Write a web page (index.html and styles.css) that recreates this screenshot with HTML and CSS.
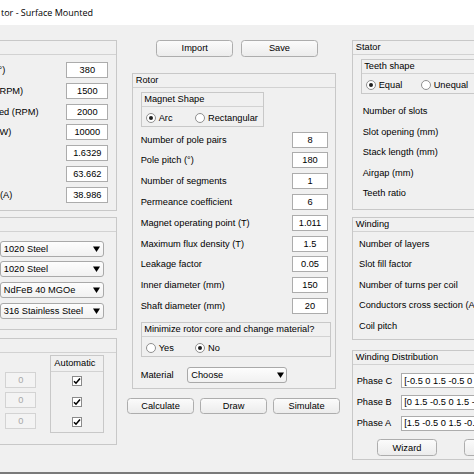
FILE: index.html
```html
<!DOCTYPE html>
<html lang="en">
<head>
<meta charset="utf-8">
<title>Motor - Surface Mounted</title>
<link rel="stylesheet" href="styles.css">
</head>
<body>
<div class="titlebar"><span class="title">tor - Surface Mounted</span></div>
<div class="main">
  <div class="col col-left">
    <section class="panel panel-specs">
      <div class="phead">Specifications</div>
      <div class="pbody specs">
        <div class="row"><span class="lbl">Phase angle (°)</span><span class="field">380</span></div>
        <div class="row"><span class="lbl">Rated speed (RPM)</span><span class="field">1500</span></div>
        <div class="row"><span class="lbl">Maximum speed (RPM)</span><span class="field">2000</span></div>
        <div class="row"><span class="lbl">Rated power (W)</span><span class="field">10000</span></div>
        <div class="row"><span class="lbl">Ratio</span><span class="field">1.6329</span></div>
        <div class="row"><span class="lbl">Torque (Nm)</span><span class="field">63.662</span></div>
        <div class="row"><span class="lbl">Rated current (A)</span><span class="field">38.986</span></div>
      </div>
    </section>
    <section class="panel panel-mat">
      <div class="phead">Materials</div>
      <div class="pbody mats">
        <div class="row"><span class="lbl">Rotor core</span><div class="dd dd-mat"><span>1020 Steel</span><svg class="arrow" width="7" height="6" viewBox="0 0 7 6"><polygon points="0,0.5 7,0.5 3.5,6" fill="#000"/></svg></div></div>
        <div class="row"><span class="lbl">Stator core</span><div class="dd dd-mat"><span>1020 Steel</span><svg class="arrow" width="7" height="6" viewBox="0 0 7 6"><polygon points="0,0.5 7,0.5 3.5,6" fill="#000"/></svg></div></div>
        <div class="row"><span class="lbl">Magnet</span><div class="dd dd-mat"><span>NdFeB 40 MGOe</span><svg class="arrow" width="7" height="6" viewBox="0 0 7 6"><polygon points="0,0.5 7,0.5 3.5,6" fill="#000"/></svg></div></div>
        <div class="row"><span class="lbl">Shaft</span><div class="dd dd-mat"><span>316 Stainless Steel</span><svg class="arrow" width="7" height="6" viewBox="0 0 7 6"><polygon points="0,0.5 7,0.5 3.5,6" fill="#000"/></svg></div></div>
      </div>
    </section>
    <section class="panel panel-auto">
      <div class="phead">Options</div>
      <div class="pbody autos">
        <div class="autofields">
          <div class="row"><span class="lbl">Yoke</span><span class="field dis">0</span></div>
          <div class="row"><span class="lbl">Tooth</span><span class="field dis">0</span></div>
          <div class="row"><span class="lbl">Slot</span><span class="field dis">0</span></div>
        </div>
        <div class="table">
          <div class="thead">Automatic</div>
          <div class="trow"><span class="check"><svg width="8" height="8" viewBox="0 0 8 8"><polyline points="1,4.2 3,6.2 7,1.6" fill="none" stroke="#000" stroke-width="1.6"/></svg></span></div>
          <div class="trow"><span class="check"><svg width="8" height="8" viewBox="0 0 8 8"><polyline points="1,4.2 3,6.2 7,1.6" fill="none" stroke="#000" stroke-width="1.6"/></svg></span></div>
          <div class="trow"><span class="check"><svg width="8" height="8" viewBox="0 0 8 8"><polyline points="1,4.2 3,6.2 7,1.6" fill="none" stroke="#000" stroke-width="1.6"/></svg></span></div>
        </div>
      </div>
    </section>
  </div>

  <div class="col col-mid">
    <div class="btnrow top-btns"><button class="btn btn-top">Import</button><button class="btn btn-top">Save</button></div>
    <section class="panel panel-rotor">
      <div class="phead">Rotor</div>
      <div class="pbody rotor">
        <div class="group g-magnet">
          <div class="ghead">Magnet Shape</div>
          <div class="radios"><span class="radio on r-first"><span class="dot"></span>Arc</span><span class="radio"><span class="dot"></span>Rectangular</span></div>
        </div>
        <div class="rotor-rows">
          <div class="row"><span class="lbl">Number of pole pairs</span><span class="field fr">8</span></div>
          <div class="row"><span class="lbl">Pole pitch (°)</span><span class="field fr">180</span></div>
          <div class="row"><span class="lbl">Number of segments</span><span class="field fr">1</span></div>
          <div class="row"><span class="lbl">Permeance coefficient</span><span class="field fr">6</span></div>
          <div class="row"><span class="lbl">Magnet operating point (T)</span><span class="field fr">1.011</span></div>
          <div class="row"><span class="lbl">Maximum flux density (T)</span><span class="field fr">1.5</span></div>
          <div class="row"><span class="lbl">Leakage factor</span><span class="field fr">0.05</span></div>
          <div class="row"><span class="lbl">Inner diameter (mm)</span><span class="field fr">150</span></div>
          <div class="row"><span class="lbl">Shaft diameter (mm)</span><span class="field fr">20</span></div>
        </div>
        <div class="group g-min">
          <div class="ghead">Minimize rotor core and change material?</div>
          <div class="radios"><span class="radio r-first"><span class="dot"></span>Yes</span><span class="radio on"><span class="dot"></span>No</span></div>
        </div>
        <div class="matrow"><span class="lbl lbl-mat">Material</span><div class="dd dd-choose"><span>Choose</span><svg class="arrow" width="7" height="6" viewBox="0 0 7 6"><polygon points="0,0.5 7,0.5 3.5,6" fill="#000"/></svg></div></div>
      </div>
    </section>
    <div class="btnrow bottom-btns"><button class="btn btn-bot">Calculate</button><button class="btn btn-bot">Draw</button><button class="btn btn-bot">Simulate</button></div>
  </div>

  <div class="col col-right">
    <section class="panel panel-stator">
      <div class="phead">Stator</div>
      <div class="pbody stator">
        <div class="group g-teeth">
          <div class="ghead">Teeth shape</div>
          <div class="radios"><span class="radio on r-teeth"><span class="dot"></span>Equal</span><span class="radio"><span class="dot"></span>Unequal</span></div>
        </div>
        <div class="lrows stator-rows">
          <div class="lrow">Number of slots</div>
          <div class="lrow">Slot opening (mm)</div>
          <div class="lrow">Stack length (mm)</div>
          <div class="lrow">Airgap (mm)</div>
          <div class="lrow">Teeth ratio</div>
        </div>
      </div>
    </section>
    <section class="panel panel-winding">
      <div class="phead">Winding</div>
      <div class="pbody winding">
        <div class="lrow">Number of layers</div>
        <div class="lrow">Slot fill factor</div>
        <div class="lrow">Number of turns per coil</div>
        <div class="lrow">Conductors cross section (A/mm²)</div>
        <div class="lrow">Coil pitch</div>
      </div>
    </section>
    <section class="panel panel-wd">
      <div class="phead">Winding Distribution</div>
      <div class="pbody wd">
        <div class="prow"><span class="plbl">Phase C</span><span class="field pfield">[-0.5 0 1.5 -0.5 0 1.5 -0.5 0 1.5]</span></div>
        <div class="prow"><span class="plbl">Phase B</span><span class="field pfield">[0 1.5 -0.5 0 1.5 -0.5 0 1.5 -0.5]</span></div>
        <div class="prow"><span class="plbl">Phase A</span><span class="field pfield">[1.5 -0.5 0 1.5 -0.5 0 1.5 -0.5 0]</span></div>
        <div class="wbtns"><button class="btn btn-wiz">Wizard</button><button class="btn btn-wiz">Apply</button></div>
      </div>
    </section>
  </div>
</div>
<div class="bottombar"></div>
</body>
</html>
```

FILE: styles.css
```css
* { box-sizing: border-box; }
html, body { margin: 0; padding: 0; }
body {
  width: 474px;
  height: 474px;
  overflow: hidden;
  background: #f0f0f0;
  font-family: "Liberation Sans", Arial, sans-serif;
  font-size: 9.25px;
  color: #000;
  display: flex;
  flex-direction: column;
}
.titlebar {
  height: 25px;
  flex: none;
  background: #fff;
  display: flex;
  align-items: center;
  font-family: "Open Sans", "Noto Sans", sans-serif;
  font-size: 9px;
  padding-left: 1px;
  color: #000;
}
.main {
  height: 446.7px;
  flex: none;
  display: flex;
  align-items: flex-start;
}
.bottombar { flex: 1; background: #7a7a7a; }

.col { flex: none; display: flex; flex-direction: column; }
.col-left { width: 117px; padding-top: 15px; }
.col-left .panel { margin-left: -67px; }
.col-mid { width: 213px; margin-left: 10.3px; }
.col-right { width: 200px; margin-left: 12px; padding-top: 15px; }

.panel { border: 1px solid #c8c8c8; background: #f0f0f0; }
.phead {
  height: 14px;
  line-height: 13px;
  border-bottom: 1px solid #d2d2d2;
  padding-left: 2.5px;
  white-space: nowrap;
}
.pbody { display: flex; flex-direction: column; }

.row { display: flex; align-items: center; justify-content: space-between; height: 16px; white-space: nowrap; }
.lbl { white-space: nowrap; }

.field {
  height: 16px;
  background: #fff;
  border: 1px solid #acacac;
  display: flex;
  align-items: center;
  justify-content: center;
  white-space: nowrap;
  overflow: hidden;
}
.field.dis { color: #a8a8a8; border-color: #d3d3d3; background: #f3f3f3; }

/* left column */
.panel-specs { height: 170.7px; }
.specs { padding: 7px 7.7px 0 7.4px; gap: 4.8px; }
.specs .field { width: 42px; }

.panel-mat { height: 113px; margin-top: 6.3px; }
.mats { padding: 8.7px 11.7px 0 7.4px; gap: 4.8px; }

.dd {
  height: 16px;
  border: 1px solid #a9a9a9;
  border-radius: 3px;
  background: linear-gradient(#fdfdfd, #f1f1f1);
  display: flex;
  align-items: center;
  justify-content: space-between;
  padding: 0 3px 0 3px;
  white-space: nowrap;
}
.dd .arrow { flex: none; }
.dd-mat { width: 104.5px; }

.panel-auto { height: 107px; margin-top: 8px; }
.autos { flex-direction: row; justify-content: space-between; padding: 2px 11.7px 0 7.4px; }
.autofields { display: flex; flex-direction: column; gap: 4.5px; padding-top: 16.7px; flex: 1; margin-right: 14px; }
.autofields .field { width: 31px; }
.table { width: 54px; height: 78px; border: 1px solid #c8c8c8; flex: none; }
.thead { height: 15.7px; line-height: 14.5px; border-bottom: 1px solid #d2d2d2; padding-left: 3px; }
.trow { height: 20.4px; display: flex; align-items: center; justify-content: center; padding-bottom: 1.5px; }
.check {
  width: 10px; height: 10px;
  border: 1px solid #8a8a8a;
  background: #fff;
  display: flex; align-items: center; justify-content: center;
}

/* buttons */
.btnrow { display: flex; }
.btn {
  font: inherit;
  color: #000;
  margin: 0;
  padding: 0;
  border: 1px solid #adadad;
  border-radius: 3.5px;
  background: linear-gradient(#fbfbfb, #ececec);
  display: flex;
  align-items: center;
  justify-content: center;
}
.top-btns { margin-top: 15px; padding-left: 28.7px; gap: 7.4px; }
.btn-top { width: 77.4px; height: 16.7px; }
.bottom-btns { margin-top: 9px; gap: 6.5px; }
.btn-bot { width: 66.5px; height: 16px; }

/* rotor */
.panel-rotor { margin-top: 16px; margin-left: 5px; width: 204.2px; height: 316.6px; }
.rotor { padding: 4.6px 7.2px 0 7.4px; }
.group { border: 1px solid #c8c8c8; }
.ghead { height: 14px; line-height: 13px; border-bottom: 1px solid #d2d2d2; padding-left: 2.5px; white-space: nowrap; }
.radios { display: flex; align-items: center; height: 20px; padding-left: 4px; padding-top: 1px; }
.radio { display: flex; align-items: center; white-space: nowrap; }
.radio .dot {
  width: 10px; height: 10px;
  border: 1px solid #8f8f8f;
  border-radius: 50%;
  background: #fff;
  margin-right: 3px;
  display: flex; align-items: center; justify-content: center;
  flex: none;
}
.radio.on .dot::after { content: ""; width: 4px; height: 4px; border-radius: 50%; background: #1e1e1e; }
.r-first { width: 49.3px; }
.r-teeth { width: 55px; }
.g-magnet { width: 123.3px; height: 35px; }
.rotor-rows { display: flex; flex-direction: column; gap: 4.8px; margin-top: 4.4px; }
.field.fr { width: 36.6px; }
.g-min { width: 190px; height: 35px; margin-top: 8.2px; }
.matrow { display: flex; align-items: center; height: 16px; margin-top: 9.4px; }
.lbl-mat { width: 46.6px; }
.dd-choose { width: 100px; padding-right: 2.5px; }

/* right column */
.panel-stator { height: 170px; }
.stator { padding: 4px 0 0 7.4px; }
.g-teeth { width: 200px; height: 35px; }
.lrows { display: flex; flex-direction: column; }
.stator-rows { margin-top: 7.4px; padding-left: 2px; }
.lrow { height: 20.5px; line-height: 20.5px; white-space: nowrap; }

.panel-winding { height: 123.3px; margin-top: 6.7px; }
.winding { padding: 2.3px 0 0 5.7px; }

.panel-wd { height: 110px; margin-top: 10px; }
.wd { padding: 8.3px 0 0 3.4px; gap: 6.3px; }
.prow { display: flex; align-items: center; height: 15px; }
.plbl { width: 44.3px; flex: none; white-space: nowrap; }
.pfield { width: 150px; height: 15px; justify-content: flex-start; padding-left: 2.3px; flex: none; }
.wbtns { display: flex; gap: 27.3px; padding-left: 20.6px; margin-top: 2px; }
.btn-wiz { width: 59.4px; height: 16.7px; flex: none; }
```
